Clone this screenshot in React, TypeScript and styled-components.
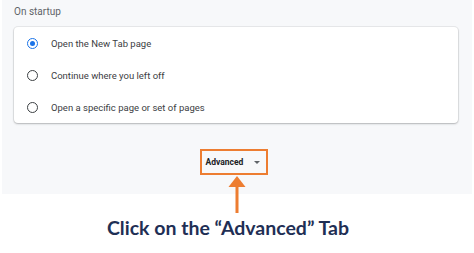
import React from "react";
import styled, { createGlobalStyle } from "styled-components";

const Global = createGlobalStyle`
  html, body { margin: 0; padding: 0; background: #ffffff; }
  body { width: 474px; height: 253px; overflow: hidden; font-family: Roboto, "Liberation Sans", sans-serif; }
`;

const Page = styled.div`
  position: relative;
  width: 474px;
  height: 253px;
`;

const Panel = styled.section`
  margin-left: 2px;
  width: 470px;
  height: 194px;
  background: #f7f8fa;
  display: flex;
  flex-direction: column;
  padding: 0 14px 0 12px;
  box-sizing: border-box;
`;

const Heading = styled.h2`
  margin: 0;
  padding: 5px 0 0 0;
  height: 27px;
  box-sizing: border-box;
  font-size: 10px;
  font-weight: 400;
  color: #5f6368;
  line-height: 14px;
`;

const Card = styled.div`
  background: #ffffff;
  border-radius: 4px;
  box-shadow: 0 0 0 1px rgba(60, 64, 67, 0.08), 0 1px 2px 0 rgba(60, 64, 67, 0.3);
  display: flex;
  flex-direction: column;
  height: 96px;
`;

const Row = styled.label`
  display: flex;
  align-items: center;
  height: 32px;
  padding-left: 13px;
  gap: 13px;
  font-size: 9.5px;
  color: #3c4043;
`;

const Radio = styled.span<{ $checked?: boolean }>`
  width: 11px;
  height: 11px;
  border-radius: 50%;
  box-sizing: border-box;
  border: 1.4px solid ${(p) => (p.$checked ? "#1a73e8" : "#3c4043")};
  display: flex;
  align-items: center;
  justify-content: center;
  &::after {
    content: "";
    width: 5px;
    height: 5px;
    border-radius: 50%;
    background: ${(p) => (p.$checked ? "#1a73e8" : "transparent")};
  }
`;

const ButtonRow = styled.div`
  display: flex;
  justify-content: center;
  padding-top: 26px;
  padding-right: 5px;
`;

const AdvancedButton = styled.div`
  width: 68px;
  height: 26px;
  box-sizing: border-box;
  border: 2px solid #ed7d31;
  display: flex;
  align-items: center;
  justify-content: space-between;
  padding: 0 6px 0 4px;
  font-size: 8.5px;
  font-weight: 700;
  color: #202124;
`;

const Caret = styled.span`
  width: 0;
  height: 0;
  border-left: 3px solid transparent;
  border-right: 3px solid transparent;
  border-top: 3px solid #5f6368;
`;

const Arrow = styled.svg`
  position: absolute;
  left: 227px;
  top: 175px;
`;

const Caption = styled.p`
  margin: 0;
  padding-top: 22px;
  padding-right: 18px;
  text-align: center;
  font-family: Lato, "Open Sans", sans-serif;
  font-weight: 700;
  font-size: 19.5px;
  line-height: 24px;
  color: #1f2f55;
`;

export default function App() {
  return (
    <Page>
      <Global />
      <Panel>
        <Heading>On startup</Heading>
        <Card>
          <Row>
            <Radio $checked />
            Open the New Tab page
          </Row>
          <Row>
            <Radio />
            Continue where you left off
          </Row>
          <Row>
            <Radio />
            Open a specific page or set of pages
          </Row>
        </Card>
        <ButtonRow>
          <AdvancedButton>
            Advanced
            <Caret />
          </AdvancedButton>
        </ButtonRow>
      </Panel>
      <Caption>Click on the “Advanced” Tab</Caption>
      <Arrow width="20" height="40" viewBox="0 0 20 40">
        <polygon points="10,1 18.5,12 1.5,12" fill="#ed7d31" />
        <rect x="8.5" y="10" width="3" height="28" fill="#ed7d31" />
      </Arrow>
    </Page>
  );
}
